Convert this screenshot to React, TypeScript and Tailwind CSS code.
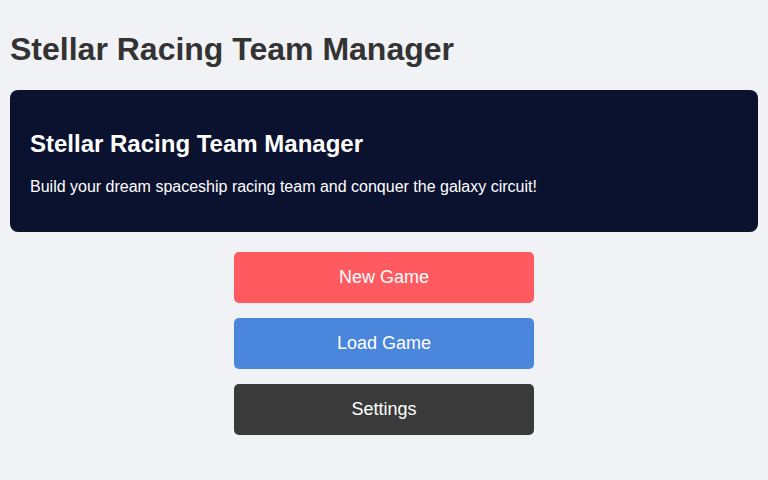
export default function App() {
  const buttons = [
    { label: 'New Game', cls: 'bg-[#ff5a5f]' },
    { label: 'Load Game', cls: 'bg-[#4a86dc]' },
    { label: 'Settings', cls: 'bg-[#3a3a3a]' },
  ];

  return (
    <div
      className="min-h-screen bg-[#f0f2f5] p-[10px] text-[#333]"
      style={{ fontFamily: '"Liberation Sans", Arial, sans-serif' }}
    >
      <h1 className="my-[21.44px] text-[32px] font-bold leading-[37px]">Stellar Racing Team Manager</h1>

      <div className="rounded-[8px] bg-[#0b1230] px-[20px] pt-[40px] pb-[36px] text-white">
        <h2 className="text-[24px] font-bold leading-[28px]">Stellar Racing Team Manager</h2>
        <p className="mt-[20px] text-[16px] leading-[18px]">
          Build your dream spaceship racing team and conquer the galaxy circuit!
        </p>
      </div>

      <div className="mt-[20px] flex flex-col items-center gap-[15px]">
        {buttons.map((b) => (
          <button
            key={b.label}
            className={`flex h-[51px] w-[300px] items-center justify-center rounded-[5px] text-[18px] text-white ${b.cls}`}
          >
            {b.label}
          </button>
        ))}
      </div>
    </div>
  );
}
